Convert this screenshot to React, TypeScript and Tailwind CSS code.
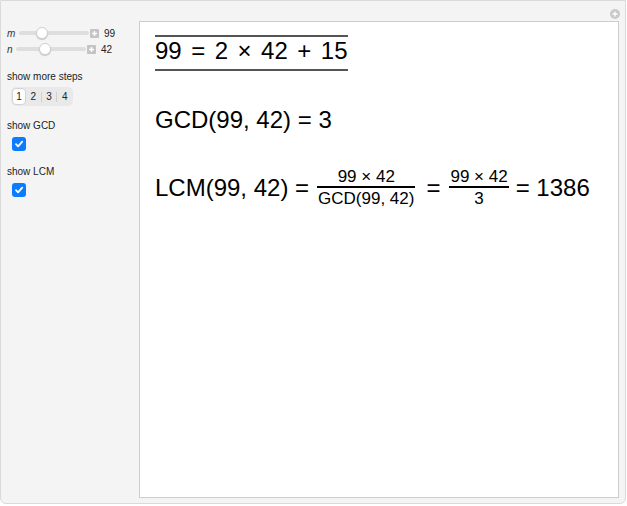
import React, { useState } from 'react'

const font = { fontFamily: '"Liberation Sans", Arial, sans-serif' }

const PlusBox = () => (
  <span className="inline-flex h-[9px] w-[9px] items-center justify-center rounded-[1px] bg-[#c4c4c4]">
    <svg width="7" height="7" viewBox="0 0 7 7">
      <path d="M3.5 1v5M1 3.5h5" stroke="#fff" strokeWidth="1.4" />
    </svg>
  </span>
)

const Slider = ({ label, pos, value, track }: { label: string; pos: number; value: number; track: number }) => (
  <div className="flex h-[16px] items-center">
    <span className="pl-[6px] text-[10px] italic text-[#333]" style={{ width: label === 'm' ? 18 : 15 }}>
      {label}
    </span>
    <div className="relative h-[16px]" style={{ width: track }}>
      <div className="absolute left-0 right-0 top-[6px] h-[4px] rounded-full bg-[#dedede]" />
      <div
        className="absolute top-[2px] h-[12px] w-[12px] rounded-full border border-[#d0d0d0] bg-white shadow-[0_1px_1px_rgba(0,0,0,0.2)]"
        style={{ left: pos - 6 }}
      />
    </div>
    <span className="ml-[1px] flex items-center"><PlusBox /></span>
    <span className="ml-[5px] text-[10px] text-[#222]">{value}</span>
  </div>
)

const Check = () => (
  <span className="ml-[11px] inline-flex h-[14px] w-[14px] items-center justify-center rounded-[3px] bg-[#0b7cff]">
    <svg width="10" height="10" viewBox="0 0 10 10">
      <path d="M2 5.2l2.1 2.2L8.2 2.6" fill="none" stroke="#fff" strokeWidth="1.8" strokeLinecap="round" strokeLinejoin="round" />
    </svg>
  </span>
)

const Frac = ({ top, bottom, className }: { top: string; bottom: string; className: string }) => (
  <span className={'inline-flex flex-col items-center align-middle text-[17px] leading-[19px] ' + className}>
    <span className="px-[1px]">{top}</span>
    <span className="h-[2px] w-full bg-black" />
    <span className="px-[1px] pt-[1px]">{bottom}</span>
  </span>
)

export default function App() {
  const [step, setStep] = useState(1)

  return (
    <div className="h-[506px] w-[627px] bg-white" style={font}>
      <div className="relative flex h-[504px] w-[626px] rounded-b-[6px] border border-[#dadada] bg-[#f4f4f4]">
        <span className="absolute right-[5px] top-[8px] inline-flex h-[10px] w-[10px] items-center justify-center rounded-full bg-[#c9c9c9]">
          <svg width="6" height="6" viewBox="0 0 6 6">
            <path d="M3 0.5v5M0.5 3h5" stroke="#fff" strokeWidth="1.3" />
          </svg>
        </span>

        <div className="w-[138px] shrink-0 pt-[24px]">
          <Slider label="m" pos={23} value={99} track={70} />
          <Slider label="n" pos={29} value={42} track={70} />

          <div className="mt-[12px] pl-[6px] text-[10px] text-[#222]">show more steps</div>
          <div className="ml-[10px] mt-[3px] flex h-[19px] w-[62px] items-center rounded-[5px] bg-[#e9e9e9] px-[1px] text-[10px] text-[#222]">
            {[1, 2, 3, 4].map((n, i) => (
              <React.Fragment key={n}>
                {i > 1 && <span className="h-[10px] w-px bg-[#cfcfcf]" />}
                <button
                  onClick={() => setStep(n)}
                  className={
                    n === step
                      ? 'flex h-[17px] w-[14px] items-center justify-center rounded-[4px] border border-[#d4d4d4] bg-white'
                      : 'flex h-[17px] flex-1 items-center justify-center'
                  }
                >
                  {n}
                </button>
              </React.Fragment>
            ))}
          </div>

          <div className="mt-[12px] pl-[6px] text-[10px] text-[#222]">show GCD</div>
          <div className="mt-[4px] flex"><Check /></div>
          <div className="mt-[13px] pl-[6px] text-[10px] text-[#222]">show LCM</div>
          <div className="mt-[4px] flex"><Check /></div>
        </div>

        <div className="mb-[5px] mr-[6px] mt-[20px] flex-1 border border-[#cdcdcd] bg-white pl-[15px] pt-[13px] text-black">
          <div className="inline-flex gap-[9.5px] border-y-2 border-[#555] pb-[6px] pt-[2px] text-[24px] leading-[24px]">
            <span>99</span>
            <span>=</span>
            <span>2</span>
            <span>×</span>
            <span>42</span>
            <span>+</span>
            <span>15</span>
          </div>

          <div className="mt-[35px] text-[24px] leading-[28px]">GCD(99, 42) = 3</div>

          <div className="mt-[33px] flex items-center text-[24px] leading-[28px]">
            <span>LCM(99, 42) =</span>
            <Frac top="99 × 42" bottom="GCD(99, 42)" className="ml-[8px] mr-[11px]" />
            <span>=</span>
            <Frac top="99 × 42" bottom="3" className="ml-[9px] mr-[7px]" />
            <span>= 1386</span>
          </div>
        </div>
      </div>
    </div>
  )
}
